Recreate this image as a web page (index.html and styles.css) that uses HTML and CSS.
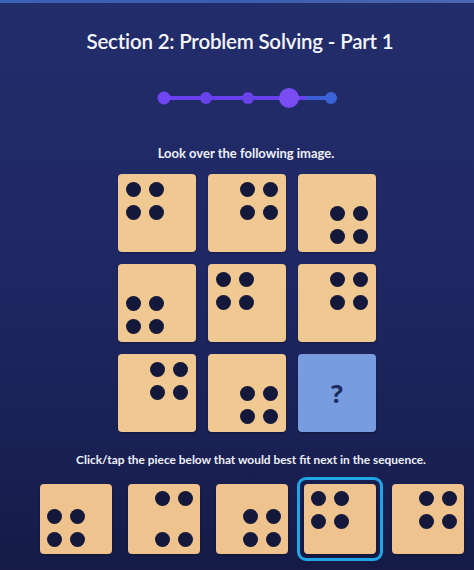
FILE: index.html
```html
<!DOCTYPE html>
<html lang="en">
<head>
<meta charset="utf-8">
<title>Section 2: Problem Solving - Part 1</title>
<link rel="stylesheet" href="styles.css">
</head>
<body>
<div class="screen">
  <div class="topstrip"></div>
  <h1 class="title">Section 2: Problem Solving - Part 1</h1>
  <div class="progress">
    <svg width="187" height="26" viewBox="0 0 187 26">
      <line x1="10" y1="13" x2="152" y2="13" stroke="#6a40ee" stroke-width="4"/>
      <line x1="152" y1="13" x2="177" y2="13" stroke="#3b5fd4" stroke-width="4"/>
      <circle cx="10" cy="13" r="6.5" fill="#6f46f2"/>
      <circle cx="52" cy="13" r="6" fill="#6a42ea"/>
      <circle cx="94" cy="13" r="6" fill="#6a42ea"/>
      <circle cx="135" cy="13" r="10" fill="#7a4df4"/>
      <circle cx="177" cy="13" r="6" fill="#3b62d6"/>
    </svg>
  </div>
  <p class="prompt">Look over the following image.</p>
  <div class="grid">
    <div class="tile tl"><div class="cluster"><i></i><i></i><i></i><i></i></div></div>
    <div class="tile tr"><div class="cluster"><i></i><i></i><i></i><i></i></div></div>
    <div class="tile br"><div class="cluster"><i></i><i></i><i></i><i></i></div></div>
    <div class="tile bl"><div class="cluster"><i></i><i></i><i></i><i></i></div></div>
    <div class="tile tl"><div class="cluster"><i></i><i></i><i></i><i></i></div></div>
    <div class="tile tr"><div class="cluster"><i></i><i></i><i></i><i></i></div></div>
    <div class="tile tr"><div class="cluster"><i></i><i></i><i></i><i></i></div></div>
    <div class="tile br"><div class="cluster"><i></i><i></i><i></i><i></i></div></div>
    <div class="tile blank">?</div>
  </div>
  <p class="prompt small">Click/tap the piece below that would best fit next in the sequence.</p>
  <div class="answers">
    <div class="tile ans bl"><div class="cluster"><i></i><i></i><i></i><i></i></div></div>
    <div class="tile ans split"><div class="cluster"><i></i><i></i></div><div class="cluster"><i></i><i></i></div></div>
    <div class="tile ans br"><div class="cluster"><i></i><i></i><i></i><i></i></div></div>
    <div class="tile ans tl selected"><div class="cluster"><i></i><i></i><i></i><i></i></div></div>
    <div class="tile ans tr"><div class="cluster"><i></i><i></i><i></i><i></i></div></div>
  </div>
</div>
</body>
</html>
```

FILE: styles.css
```css
html, body {
  margin: 0;
  padding: 0;
}
body {
  width: 474px;
  height: 570px;
  overflow: hidden;
  font-family: Lato, "Open Sans", sans-serif;
  color: #ffffff;
  background: #1c2460;
}
.screen {
  width: 474px;
  height: 570px;
  display: flex;
  flex-direction: column;
  align-items: center;
  background: linear-gradient(180deg, #222d6b 0%, #1f2864 45%, #1a2156 75%, #151b46 100%);
}
.topstrip {
  align-self: stretch;
  height: 3px;
  background: linear-gradient(90deg, #3a62b8, #3c5cae 50%, #4a68b0);
}
.title {
  margin: 26px 0 0 6px;
  font-size: 20.5px;
  line-height: 24px;
  font-weight: 600;
  letter-spacing: -0.2px;
  color: #f4f6fb;
}
.progress {
  margin: 32px 0 0 0;
  height: 26px;
  padding-left: 20px;
}
.progress svg {
  display: block;
}
.prompt {
  margin: 34px 0 0 18px;
  font-size: 13px;
  line-height: 16px;
  font-weight: 700;
  color: #eef0f8;
}
.grid {
  margin: 13px 0 0 20px;
  display: grid;
  grid-template-columns: repeat(3, 78px);
  grid-auto-rows: 78px;
  gap: 12px;
}
.tile {
  background: #f0c891;
  border-radius: 4px;
  padding: 8px;
  box-sizing: border-box;
  display: flex;
  box-shadow: 0 1px 2px rgba(0, 0, 0, 0.35);
  position: relative;
}
.tile.tl { justify-content: flex-start; align-items: flex-start; }
.tile.tr { justify-content: flex-end; align-items: flex-start; }
.tile.bl { justify-content: flex-start; align-items: flex-end; }
.tile.br { justify-content: flex-end; align-items: flex-end; }
.tile.split {
  flex-direction: column;
  justify-content: space-between;
  align-items: flex-end;
}
.cluster {
  display: grid;
  grid-template-columns: repeat(2, 15px);
  grid-auto-rows: 15px;
  gap: 8px;
}
.cluster i {
  display: block;
  width: 15px;
  height: 15px;
  border-radius: 50%;
  background: #14183a;
}
.tile.blank {
  background: #779de0;
  color: #1e2a5c;
  font-weight: 700;
  font-size: 25px;
  justify-content: center;
  align-items: center;
  font-family: "Open Sans", sans-serif;
}
.prompt.small {
  margin: 21px 0 0 28px;
  font-size: 11.9px;
  line-height: 14px;
}
.answers {
  margin: 17px 0 0 30px;
  display: flex;
  gap: 16px;
}
.tile.ans {
  width: 72px;
  height: 70px;
  background: #eec38e;
  padding: 7px;
}
.tile.selected::after {
  content: "";
  position: absolute;
  inset: -7px;
  border: 3px solid #1fa6e6;
  border-radius: 9px;
}
```
